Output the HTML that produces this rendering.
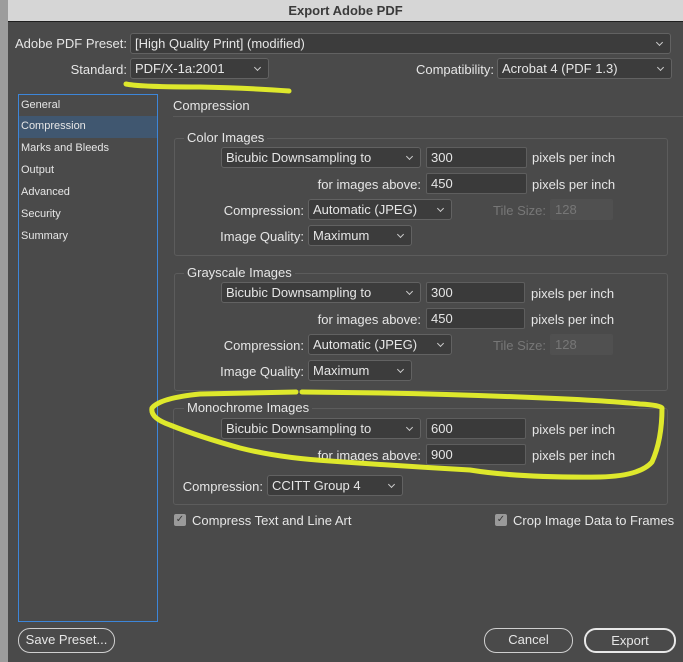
<!DOCTYPE html><html><head><style>
*{box-sizing:border-box;margin:0;padding:0}
body{width:683px;height:662px;background:#9c9c9c;font-family:"Liberation Sans",sans-serif;font-size:13px;color:#e6e6e6;position:relative;overflow:hidden}
.win{position:absolute;left:8px;top:0;width:675px;height:662px;background:#4a4a4a}
.title{position:absolute;left:8px;top:0;width:675px;height:22px;background:#d6d6d6;border-bottom:1px solid #1e1e1e;color:#3a3a3a;font-weight:bold;font-size:13px;text-align:center;line-height:21px}
.a{position:absolute;white-space:nowrap}
.r{text-align:right}
.sel{position:absolute;background:#3c3c3c;border:1px solid #626262;border-radius:3px;padding-left:4px;line-height:19px;white-space:nowrap}
.sel:after{content:"";position:absolute;right:8px;top:6px;width:4px;height:4px;border-right:1px solid #ccc;border-bottom:1px solid #ccc;transform:rotate(45deg)}
.inp{position:absolute;background:#3a3a3a;border:1px solid #5e5e5e;border-radius:2px;padding-left:4px;line-height:19px}
.grp{position:absolute;border:1px solid #5c5c5c;border-radius:3px}
.leg{position:absolute;background:#4a4a4a;padding:0 3px;font-size:13px}
.btn{position:absolute;border:1px solid #cfcfcf;border-radius:12px;text-align:center;line-height:22px;font-size:13px}
.cb{position:absolute;width:12px;height:12px;background:#9a9a9a;border-radius:2px;color:#3a3a3a;font-size:10px;line-height:12px;text-align:center}
</style></head><body>
<div class="win"></div>
<div class="title">Export Adobe PDF</div>
<div class="a r" style="left:0;width:127px;top:36px">Adobe PDF Preset:</div>
<div class="sel" style="left:130px;top:33px;width:541px;height:21px">[High Quality Print] (modified)</div>
<div class="a r" style="left:0;width:127px;top:62px">Standard:</div>
<div class="sel" style="left:130px;top:58px;width:139px;height:21px">PDF/X-1a:2001</div>
<div class="a r" style="left:380px;width:114px;top:62px">Compatibility:</div>
<div class="sel" style="left:497px;top:58px;width:175px;height:21px">Acrobat 4 (PDF 1.3)</div>

<div class="a" style="left:18px;top:94px;width:140px;height:528px;border:1px solid #3d86d9"></div>
<div class="a" style="left:19px;top:116px;width:138px;height:22px;background:#405770"></div>
<div class="a" style="left:21px;top:98px;font-size:11px;line-height:14px">General</div>
<div class="a" style="left:21px;top:120px;font-size:11px">Compression</div>
<div class="a" style="left:21px;top:142px;font-size:11px">Marks and Bleeds</div>
<div class="a" style="left:21px;top:164px;font-size:11px">Output</div>
<div class="a" style="left:21px;top:186px;font-size:11px">Advanced</div>
<div class="a" style="left:21px;top:208px;font-size:11px">Security</div>
<div class="a" style="left:21px;top:230px;font-size:11px">Summary</div>

<div class="a" style="left:173px;top:98px;font-size:13px">Compression</div>
<div class="a" style="left:173px;top:116px;width:510px;height:1px;background:#5a5a5a"></div>

<div class="grp" style="left:174px;top:138px;width:494px;height:118px"></div>
<div class="leg" style="left:184px;top:130px">Color Images</div>
<div class="sel" style="left:221px;top:147px;width:200px;height:21px">Bicubic Downsampling to</div>
<div class="inp" style="left:426px;top:147px;width:101px;height:21px">300</div>
<div class="a" style="left:532px;top:150px">pixels per inch</div>
<div class="a r" style="left:250px;width:171px;top:177px">for images above:</div>
<div class="inp" style="left:426px;top:173px;width:101px;height:21px">450</div>
<div class="a" style="left:532px;top:177px">pixels per inch</div>
<div class="a r" style="left:180px;width:124px;top:203px">Compression:</div>
<div class="sel" style="left:308px;top:199px;width:144px;height:21px">Automatic (JPEG)</div>
<div class="a" style="left:493px;top:203px;color:#777">Tile Size:</div>
<div class="inp" style="left:550px;top:199px;width:63px;height:21px;background:#505050;border-color:#505050;color:#777">128</div>
<div class="a r" style="left:180px;width:124px;top:229px">Image Quality:</div>
<div class="sel" style="left:308px;top:225px;width:104px;height:21px">Maximum</div>

<div class="grp" style="left:174px;top:273px;width:494px;height:118px"></div>
<div class="leg" style="left:184px;top:265px">Grayscale Images</div>
<div class="sel" style="left:221px;top:282px;width:200px;height:21px">Bicubic Downsampling to</div>
<div class="inp" style="left:426px;top:282px;width:99px;height:21px">300</div>
<div class="a" style="left:531px;top:286px">pixels per inch</div>
<div class="a r" style="left:250px;width:171px;top:312px">for images above:</div>
<div class="inp" style="left:426px;top:308px;width:99px;height:21px">450</div>
<div class="a" style="left:531px;top:312px">pixels per inch</div>
<div class="a r" style="left:180px;width:124px;top:338px">Compression:</div>
<div class="sel" style="left:308px;top:334px;width:144px;height:21px">Automatic (JPEG)</div>
<div class="a" style="left:493px;top:338px;color:#777">Tile Size:</div>
<div class="inp" style="left:550px;top:334px;width:63px;height:21px;background:#505050;border-color:#505050;color:#777">128</div>
<div class="a r" style="left:180px;width:124px;top:364px">Image Quality:</div>
<div class="sel" style="left:308px;top:360px;width:104px;height:21px">Maximum</div>

<div class="grp" style="left:173px;top:408px;width:495px;height:97px"></div>
<div class="leg" style="left:184px;top:400px">Monochrome Images</div>
<div class="sel" style="left:221px;top:418px;width:200px;height:21px">Bicubic Downsampling to</div>
<div class="inp" style="left:426px;top:418px;width:100px;height:21px">600</div>
<div class="a" style="left:532px;top:422px">pixels per inch</div>
<div class="a r" style="left:250px;width:171px;top:448px">for images above:</div>
<div class="inp" style="left:426px;top:444px;width:100px;height:21px">900</div>
<div class="a" style="left:532px;top:448px">pixels per inch</div>
<div class="a r" style="left:170px;width:93px;top:479px">Compression:</div>
<div class="sel" style="left:267px;top:475px;width:136px;height:21px">CCITT Group 4</div>

<div class="cb" style="left:174px;top:514px">✓</div>
<div class="a" style="left:192px;top:513px">Compress Text and Line Art</div>
<div class="cb" style="left:495px;top:514px">✓</div>
<div class="a" style="left:513px;top:513px">Crop Image Data to Frames</div>

<div class="btn" style="left:18px;top:628px;width:97px;height:25px">Save Preset...</div>
<div class="btn" style="left:484px;top:628px;width:89px;height:25px">Cancel</div>
<div class="btn" style="left:584px;top:628px;width:92px;height:25px;border-width:2px;border-color:#e8e8e8;line-height:21px">Export</div>

<svg class="a" style="left:0;top:0" width="683" height="662">
<g fill="none" stroke="#e6f02a" stroke-width="5" stroke-linecap="round" stroke-linejoin="round" opacity="0.95">
<path d="M126 84 Q140 87 200 87 Q250 88 289 91"/>
<path d="M296 392 L200 394 Q160 398 152 408 Q150 418 170 425 Q200 437 240 448 Q280 458 330 461 Q400 466 470 470 Q520 478 600 477 Q640 476 652 462 Q662 440 662 408 Q660 405 640 404 Q600 400 520 397 Q420 393 302 392"/>
</g></svg>
</body></html>
